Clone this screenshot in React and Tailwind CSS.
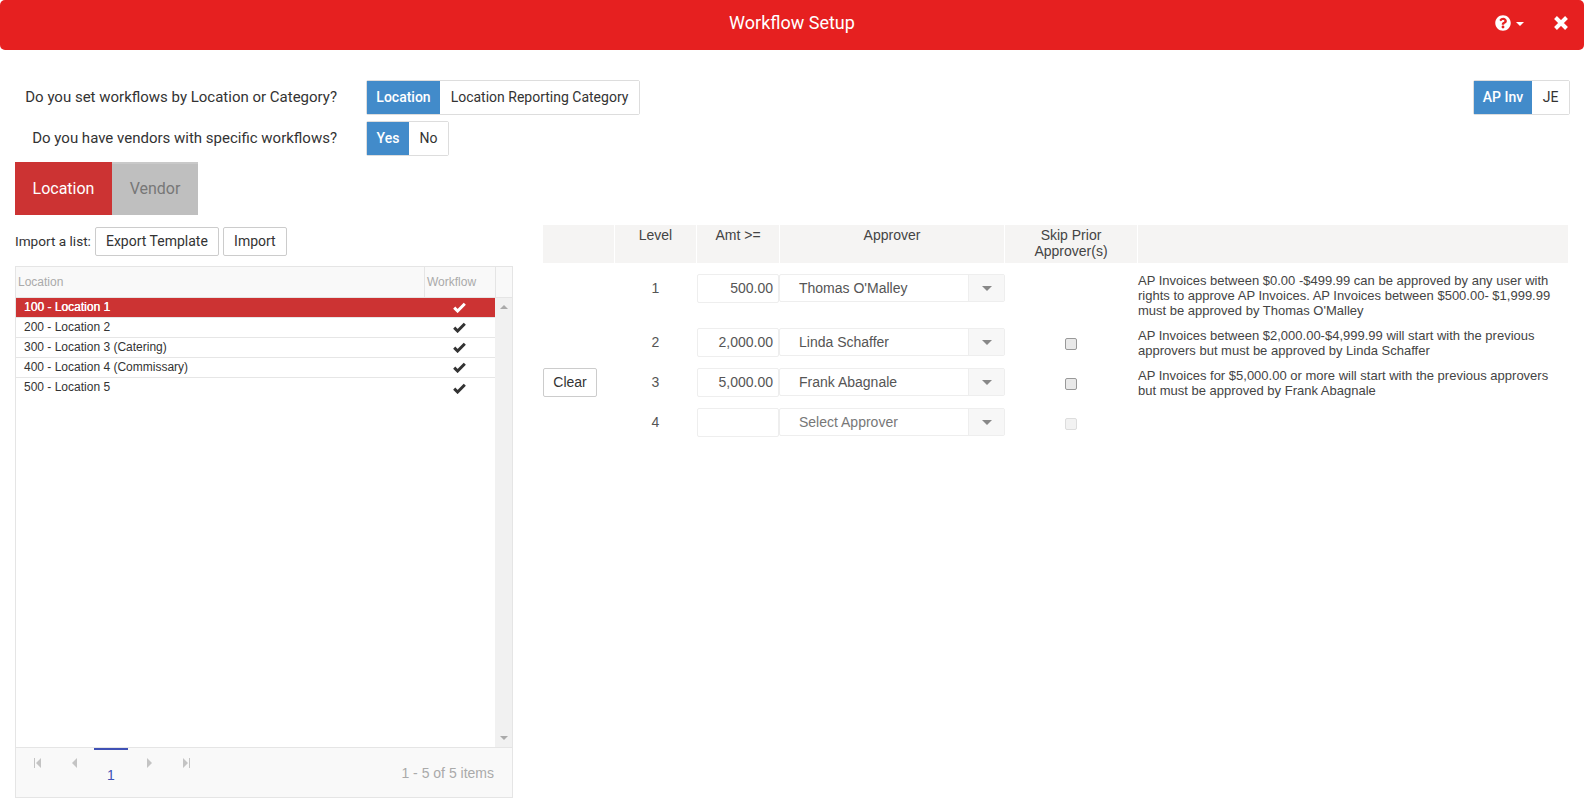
import React from "react";
import { FaQuestionCircle } from "react-icons/fa";

const locations = [
  "100 - Location 1",
  "200 - Location 2",
  "300 - Location 3 (Catering)",
  "400 - Location 4 (Commissary)",
  "500 - Location 5",
];

function Toggle({ items, active }) {
  return (
    <div className="flex h-full border border-[#ddd] rounded-[2px]">
      {items.map((item) => (
        <div
          key={item.label}
          className={
            item.label === active
              ? "flex items-center justify-center bg-[#428bca] text-white text-[14px] font-medium " + item.width
              : "flex items-center justify-center bg-white text-[#333] text-[14px] " + item.width
          }
        >
          {item.label}
        </div>
      ))}
    </div>
  );
}

function Button({ children, className }) {
  return (
    <button className={"h-[29px] flex items-center justify-center bg-white border border-[#ccc] rounded-[2px] text-[14px] text-[#333] " + className}>
      {children}
    </button>
  );
}

function HeadCell({ children }) {
  return (
    <div className="h-[38px] bg-[#f5f4f3] flex justify-center text-center text-[14px] leading-[16px] pt-[2px] text-[#444]">
      {children}
    </div>
  );
}

function Level({ children }) {
  return <div className="h-[29px] flex items-center justify-center text-[14px] text-[#555]">{children}</div>;
}

function Amount({ value }) {
  return (
    <div className="h-[29px] flex items-center justify-end pr-[5px] bg-white border border-[#eee] rounded-[2px] text-[14px] text-[#555]">
      {value}
    </div>
  );
}

function ApproverSelect({ value, placeholder }) {
  return (
    <div className="h-[28px] -ml-px -mr-px flex border border-[#eee] rounded-[2px] bg-white">
      <div className={"flex-1 flex items-center pl-[19px] text-[14px] " + (placeholder ? "text-[#777]" : "text-[#555]")}>
        {value}
      </div>
      <div className="w-[36px] bg-[#f7f7f7] border-l border-[#eee] flex items-center justify-center">
        <div className="w-0 h-0 border-x-[5px] border-x-transparent border-t-[5px] border-t-[#888]" />
      </div>
    </div>
  );
}

function Skip({ disabled }) {
  return (
    <div className="h-[29px] pt-[3px] flex items-center justify-center">
      <input
        type="checkbox"
        disabled={disabled}
        className={
          disabled
            ? "appearance-none w-[12px] h-[12px] rounded-[2px] border border-[#ddd] bg-[#f2f2f2]"
            : "appearance-none w-[12px] h-[12px] rounded-[2px] border border-[#999] bg-[#e9e9e9]"
        }
      />
    </div>
  );
}

function PagerIcon({ type }) {
  return (
    <svg width="10" height="12" viewBox="0 0 10 12" fill="#c4c4c4">
      {type === "first" && <path d="M1 1h1v10H1zM8 1v10L3 6z" />}
      {type === "prev" && <path d="M7 1v10L2 6z" />}
      {type === "next" && <path d="M3 1v10l5-5z" />}
      {type === "last" && <path d="M2 1v10l5-5zM8 1h1v10H8z" />}
    </svg>
  );
}

function CheckMark() {
  return (
    <svg width="13" height="11" viewBox="0 0 13 11" fill="none" stroke="currentColor" strokeWidth="3">
      <path d="M1.2 5.6l3.4 3.4L11.8 1.8" />
    </svg>
  );
}

function LocationGrid() {
  return (
    <div className="mt-[10px] h-[532px] border border-[#e5e5e5] flex flex-col">
      <div className="h-[31px] flex bg-[#f9f9f9] border-b border-[#e5e5e5] text-[12px] text-[#aaa]">
        <div className="w-[409px] border-r border-[#e5e5e5] pl-[2px] flex items-center">Location</div>
        <div className="w-[70px] pl-[2px] flex items-center">Workflow</div>
        <div className="flex-1 border-l border-[#e5e5e5]" />
      </div>
      <div className="flex-1 flex min-h-0">
        <div className="flex-1">
          {locations.map((name, i) => (
            <div
              key={name}
              className={
                (i === 0
                  ? "h-[20px] flex bg-[#cc3333] text-white text-[12px] [text-shadow:0.3px_0_0_white]"
                  : "h-[20px] flex bg-white text-[#333] text-[12px]") + (i < 4 ? " border-b border-[#e6e6e6]" : "")
              }
            >
              <div className="w-[407px] pl-2 leading-[18px]">{name}</div>
              <div className="w-[70px] flex items-center justify-center pl-[2px]">
                <CheckMark />
              </div>
            </div>
          ))}
        </div>
        <div className="w-[17px] bg-[#f1f1f1] flex flex-col items-center justify-between py-[7px]">
          <div className="w-0 h-0 border-x-[4px] border-x-transparent border-b-[4px] border-b-[#aaa]" />
          <div className="w-0 h-0 border-x-[4px] border-x-transparent border-t-[4px] border-t-[#aaa]" />
        </div>
      </div>
      <div className="h-[50px] bg-[#f9f9f9] border-t border-[#e5e5e5] flex justify-between pl-[3px] pr-[18px]">
        <div className="flex">
          <div className="w-[37px] pt-[9px] flex justify-center items-start"><PagerIcon type="first" /></div>
          <div className="w-[38px] pt-[9px] flex justify-center items-start"><PagerIcon type="prev" /></div>
          <div className="w-[34px] border-t-2 border-[#3f51b5] text-center text-[14px] text-[#3f51b5] pt-[17px] leading-[16px]">1</div>
          <div className="w-[2px]" />
          <div className="w-[37px] pt-[9px] flex justify-center items-start"><PagerIcon type="next" /></div>
          <div className="w-[37px] pt-[9px] flex justify-center items-start"><PagerIcon type="last" /></div>
        </div>
        <div className="text-[14px] text-[#aaa] pt-[17px] leading-[16px]">1 - 5 of 5 items</div>
      </div>
    </div>
  );
}

function WorkflowLevels() {
  return (
    <div className="grid grid-cols-[71px_81px_82px_224px_132px_1fr] gap-x-px grid-rows-[38px_65px_40px_40px_40px] text-[12px]">
      <HeadCell />
      <HeadCell>Level</HeadCell>
      <HeadCell>Amt &gt;=</HeadCell>
      <HeadCell>Approver</HeadCell>
      <HeadCell>Skip Prior<br />Approver(s)</HeadCell>
      <HeadCell />

      <div className="pt-[11px] col-start-2"><Level>1</Level></div>
      <div className="pt-[11px]"><Amount value="500.00" /></div>
      <div className="pt-[11px]"><ApproverSelect value="Thomas O'Malley" /></div>
      <div />
      <div className="pt-[10px] text-[13px] leading-[15px] text-[#444]">
        AP Invoices between $0.00 -$499.99 can be approved by any user with rights to approve AP Invoices. AP Invoices between $500.00- $1,999.99 must be approved by Thomas O'Malley
      </div>

      <div className="col-start-2"><Level>2</Level></div>
      <Amount value="2,000.00" />
      <ApproverSelect value="Linda Schaffer" />
      <Skip />
      <div className="text-[13px] leading-[15px] text-[#444]">
        AP Invoices between $2,000.00-$4,999.99 will start with the previous approvers but must be approved by Linda Schaffer
      </div>

      <Button className="w-[54px]">Clear</Button>
      <Level>3</Level>
      <Amount value="5,000.00" />
      <ApproverSelect value="Frank Abagnale" />
      <Skip />
      <div className="text-[13px] leading-[15px] text-[#444]">
        AP Invoices for $5,000.00 or more will start with the previous approvers but must be approved by Frank Abagnale
      </div>

      <div className="col-start-2"><Level>4</Level></div>
      <Amount value="" />
      <ApproverSelect value="Select Approver" placeholder />
      <Skip disabled />
      <div />
    </div>
  );
}

export default function App() {
  return (
    <div className="h-screen overflow-hidden bg-white font-['Liberation_Sans',Arial,sans-serif] text-[#333]">
      <div className="h-[50px] bg-[#e62020] rounded-[5px] grid grid-cols-[1fr_auto_1fr] items-center text-white">
        <div />
        <div className="text-[18px] font-['Roboto',sans-serif] pb-[5px]">Workflow Setup</div>
        <div className="flex justify-end items-center pr-[16px] pb-[5px]">
          <FaQuestionCircle className="w-[16px] h-[16px]" />
          <div className="ml-[5px] mt-[3px] w-0 h-0 border-x-[4px] border-x-transparent border-t-[4px] border-t-white" />
          <svg className="ml-[30px]" width="14" height="14" viewBox="0 0 14 14" fill="none" stroke="white" strokeWidth="4">
            <path d="M1.5 1.5l11 11M12.5 1.5l-11 11" />
          </svg>
        </div>
      </div>

      <div className="pl-[15px] pr-[14px] font-['Roboto',sans-serif]">
        <div className="mt-[30px] h-[35px] flex items-center">
          <div className="w-[322px] text-right text-[15px]">Do you set workflows by Location or Category?</div>
          <div className="ml-[29px] h-full">
            <Toggle
              active="Location"
              items={[
                { label: "Location", width: "w-[73px]" },
                { label: "Location Reporting Category", width: "w-[199px]" },
              ]}
            />
          </div>
          <div className="ml-auto h-full">
            <Toggle
              active="AP Inv"
              items={[
                { label: "AP Inv", width: "w-[58px]" },
                { label: "JE", width: "w-[37px]" },
              ]}
            />
          </div>
        </div>
        <div className="mt-[6px] h-[35px] flex items-center">
          <div className="w-[322px] text-right text-[15px]">Do you have vendors with specific workflows?</div>
          <div className="ml-[29px] h-full">
            <Toggle
              active="Yes"
              items={[
                { label: "Yes", width: "w-[42px]" },
                { label: "No", width: "w-[39px]" },
              ]}
            />
          </div>
        </div>
        <div className="mt-[6px] h-[53px] flex text-[16px]">
          <div className="w-[97px] bg-[#cc3333] text-white flex items-center justify-center">Location</div>
          <div className="w-[86px] bg-[#bfbfbf] border-t-2 border-[#c9c9c9] pb-[2px] text-[#777] flex items-center justify-center">Vendor</div>
        </div>

        <div className="flex">
          <div className="w-[498px]">
            <div className="mt-[12px] flex items-center gap-[4px]">
              <span className="text-[13.6px]">Import a list:</span>
              <Button className="w-[124px]">Export Template</Button>
              <Button className="w-[64px]">Import</Button>
            </div>
            <div className="font-['Liberation_Sans',Arial,sans-serif]">
              <LocationGrid />
            </div>
          </div>
          <div className="ml-[30px] flex-1 mt-[10px] pr-[2px] font-['Liberation_Sans',Arial,sans-serif]">
            <WorkflowLevels />
          </div>
        </div>
      </div>
    </div>
  );
}
